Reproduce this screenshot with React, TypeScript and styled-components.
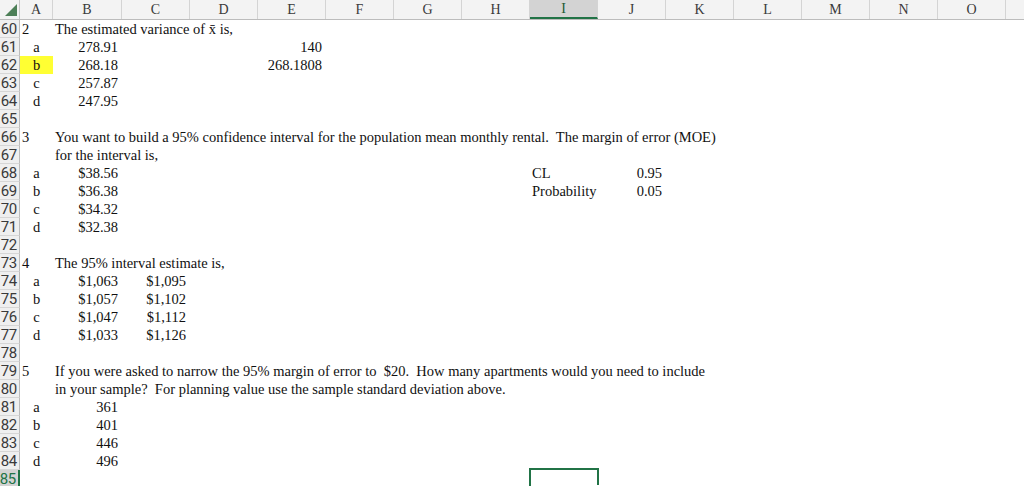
import React from "react";
import styled, { createGlobalStyle } from "styled-components";

const GlobalStyle = createGlobalStyle`
  html, body {
    margin: 0;
    padding: 0;
    background: #ffffff;
    overflow: hidden;
  }
`;

// P is only partly in view, its letter falls outside the window
const COLUMNS = ["A", "B", "C", "D", "E", "F", "G", "H", "I", "J", "K", "L", "M", "N", "O", ""];
const GRID = "20px 33px 69px repeat(13, 68px) 68px";
const ACTIVE_COL = 8;
const ACTIVE_ROW = 85;

type Align = "left" | "center" | "right";
type CellData = { col: number; text: string; align?: Align; mark?: boolean };

const choice = (letter: string, mark = false): CellData => ({
  col: 0,
  text: letter,
  align: "center",
  mark,
});
const num = (col: number, text: string): CellData => ({ col, text, align: "right" });
const label = (col: number, text: string): CellData => ({ col, text, align: "left" });

const sheet: Record<number, CellData[]> = {
  60: [label(0, "2"), label(1, "The estimated variance of x\u0304 is,")],
  61: [choice("a"), num(1, "278.91"), num(4, "140")],
  62: [choice("b", true), num(1, "268.18"), num(4, "268.1808")],
  63: [choice("c"), num(1, "257.87")],
  64: [choice("d"), num(1, "247.95")],
  66: [
    label(0, "3"),
    label(
      1,
      "You want to build a 95% confidence interval for the population mean monthly rental.\u00a0 The margin of error (MOE)"
    ),
  ],
  67: [label(1, "for the interval is,")],
  68: [choice("a"), num(1, "$38.56"), label(8, "CL"), num(9, "0.95")],
  69: [choice("b"), num(1, "$36.38"), label(8, "Probability"), num(9, "0.05")],
  70: [choice("c"), num(1, "$34.32")],
  71: [choice("d"), num(1, "$32.38")],
  73: [label(0, "4"), label(1, "The 95% interval estimate is,")],
  74: [choice("a"), num(1, "$1,063"), num(2, "$1,095")],
  75: [choice("b"), num(1, "$1,057"), num(2, "$1,102")],
  76: [choice("c"), num(1, "$1,047"), num(2, "$1,112")],
  77: [choice("d"), num(1, "$1,033"), num(2, "$1,126")],
  79: [
    label(0, "5"),
    label(
      1,
      "If you were asked to narrow the 95% margin of error to\u00a0 $20.\u00a0 How many apartments would you need to include"
    ),
  ],
  80: [label(1, "in your sample?\u00a0 For planning value use the sample standard deviation above.")],
  81: [choice("a"), num(1, "361")],
  82: [choice("b"), num(1, "401")],
  83: [choice("c"), num(1, "446")],
  84: [choice("d"), num(1, "496")],
};

const rowNumbers = Array.from({ length: 26 }, (_, i) => 60 + i);

const App = () => {
  return (
    <>
      <GlobalStyle />
      <Sheet>
        <HeaderRow>
          <Corner>
            <svg width="12" height="12" viewBox="0 0 12 12">
              <polygon points="12,0 12,12 0,12" fill="#4d7f57" />
            </svg>
          </Corner>
          {COLUMNS.map((c, i) => (
            <ColHeader key={i} $active={i === ACTIVE_COL}>
              {c}
            </ColHeader>
          ))}
        </HeaderRow>

        {rowNumbers.map((r) => {
          const cells = sheet[r] || [];
          return (
            <Row key={r}>
              <RowHeader $active={r === ACTIVE_ROW}>
                <span>{r}</span>
              </RowHeader>
              {COLUMNS.map((_, ci) => {
                const cell = cells.find((c) => c.col === ci);
                return (
                  <Cell key={ci} $align={cell?.align ?? "left"} $mark={cell?.mark}>
                    {cell?.text}
                    {r === ACTIVE_ROW && ci === ACTIVE_COL && (
                      <Selection>
                        <Handle />
                      </Selection>
                    )}
                  </Cell>
                );
              })}
            </Row>
          );
        })}
      </Sheet>
    </>
  );
};

export default App;

const Sheet = styled.div`
  width: 1024px;
  height: 486px;
  overflow: hidden;
  background: #ffffff;
  font-family: "Liberation Serif", "Times New Roman", serif;
  color: #111111;
`;

const HeaderRow = styled.div`
  display: grid;
  grid-template-columns: ${GRID};
  height: 20px;
  background: #f3f3f3;
  border-bottom: 1px solid #bcbcbc;
  box-sizing: border-box;
`;

const Corner = styled.div`
  display: flex;
  align-items: flex-end;
  justify-content: flex-end;
  padding: 0 2px 3px 0;
  border-right: 1px solid #c8c8c8;
  box-sizing: border-box;
`;

const ColHeader = styled.div<{ $active?: boolean }>`
  display: flex;
  align-items: center;
  justify-content: center;
  font-size: 14px;
  color: ${(p) => (p.$active ? "#1f5a34" : "#3a3a3a")};
  background: ${(p) => (p.$active ? "#d3d3d3" : "transparent")};
  border-right: 1px solid #d4d4d4;
  border-bottom: ${(p) => (p.$active ? "2px solid #217346" : "none")};
  box-sizing: border-box;
  padding-top: 1px;
`;

const Row = styled.div`
  display: grid;
  grid-template-columns: ${GRID};
  height: 18px;
`;

const RowHeader = styled.div<{ $active?: boolean }>`
  display: flex;
  align-items: center;
  justify-content: flex-end;
  overflow: hidden;
  padding-right: 2px;
  font-family: Roboto, "Liberation Sans", sans-serif;
  font-size: 15px;
  color: ${(p) => (p.$active ? "#217346" : "#3a3a3a")};
  background: ${(p) => (p.$active ? "#d3d3d3" : "#efefef")};
  border-bottom: 1px solid #d6d6d6;
  border-right: ${(p) => (p.$active ? "2px solid #217346" : "1px solid #bcbcbc")};
  box-sizing: border-box;

  span {
    letter-spacing: -0.3px;
  }
`;

const Cell = styled.div<{ $align: Align; $mark?: boolean }>`
  position: relative;
  display: flex;
  align-items: center;
  justify-content: ${(p) =>
    p.$align === "right" ? "flex-end" : p.$align === "center" ? "center" : "flex-start"};
  padding: ${(p) => (p.$align === "right" ? "0 4px 0 0" : p.$align === "center" ? "0" : "0 0 0 2px")};
  padding-top: 1px;
  font-size: 14.5px;
  white-space: pre;
  background: ${(p) => (p.$mark ? "#ffff33" : "transparent")};
  box-sizing: border-box;
  min-width: 0;
`;

const Selection = styled.div`
  position: absolute;
  left: -1px;
  top: -2px;
  right: -1px;
  bottom: -2px;
  border: 2px solid #217346;
  box-sizing: border-box;
`;

const Handle = styled.div`
  position: absolute;
  right: -4px;
  bottom: -4px;
  width: 5px;
  height: 5px;
  background: #217346;
  border: 1px solid #ffffff;
`;
